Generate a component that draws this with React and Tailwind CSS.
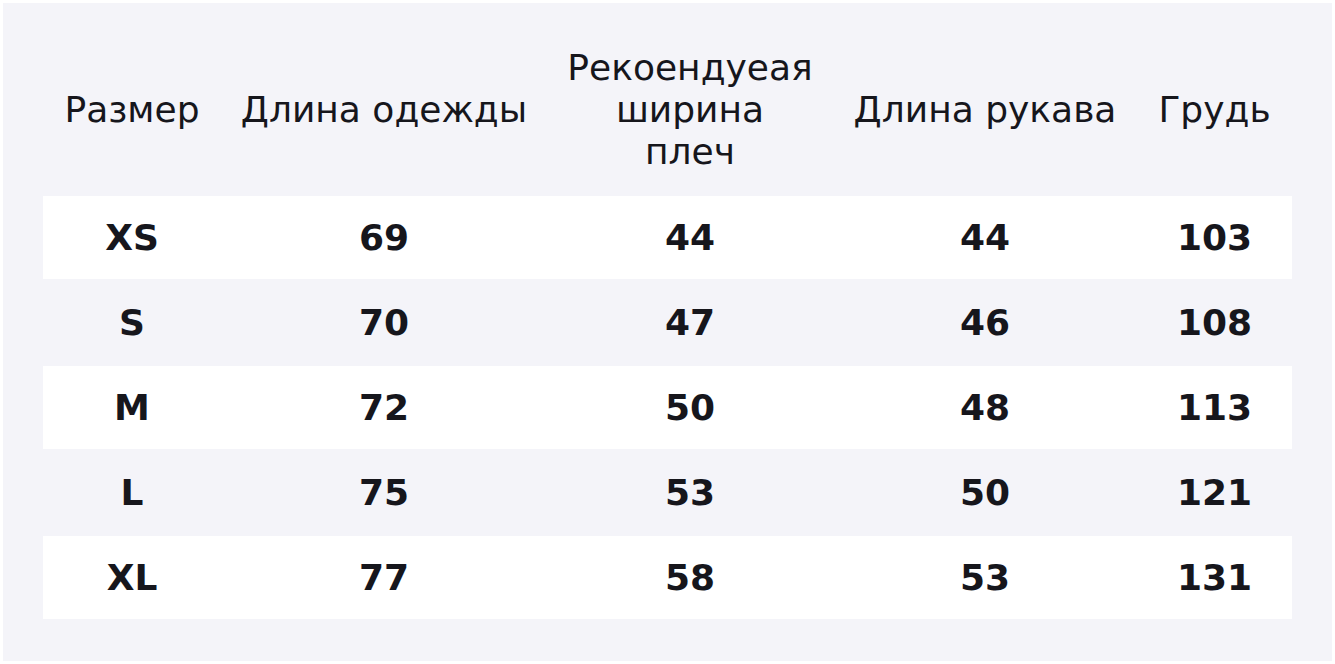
const headers = ['Размер', 'Длина одежды', 'Рекоендуеая ширина плеч', 'Длина рукава', 'Грудь'];

const rows = [
  ['XS', '69', '44', '44', '103'],
  ['S', '70', '47', '46', '108'],
  ['M', '72', '50', '48', '113'],
  ['L', '75', '53', '50', '121'],
  ['XL', '77', '58', '53', '131'],
];

const widths = ['w-[178px]', 'w-[326px]', 'w-[286px]', 'w-[304px]', 'w-[155px]'];

export default function App() {
  return (
    <div className="w-[1335px] h-[664px] bg-white p-[3px]">
      <div
        className="h-full bg-[#f4f4f9] px-10 pt-10 text-[#16161c]"
        style={{ fontFamily: '"DejaVu Sans", sans-serif' }}
      >
        <table className="w-[1249px] table-fixed border-separate border-spacing-x-0 border-spacing-y-[2px]">
          <thead>
            <tr className="h-[149px]">
              {headers.map((h, i) => (
                <th
                  key={h}
                  className={`${widths[i]} px-0 pt-0 pb-[19px] text-center align-middle text-[36px] font-normal leading-[42px]`}
                >
                  {h === 'Рекоендуеая ширина плеч' ? (
                    <>
                      Рекоендуеая
                      <br />
                      ширина
                      <br />
                      плеч
                    </>
                  ) : (
                    h
                  )}
                </th>
              ))}
            </tr>
          </thead>
          <tbody>
            {rows.map((r, ri) => (
              <tr key={r[0]} className={`h-[83px] ${ri % 2 === 0 ? 'bg-white' : 'bg-transparent'}`}>
                {r.map((c, ci) => (
                  <td key={ci} className="p-0 text-center align-middle text-[36px] font-bold leading-[42px]">
                    {c}
                  </td>
                ))}
              </tr>
            ))}
          </tbody>
        </table>
      </div>
    </div>
  );
}
